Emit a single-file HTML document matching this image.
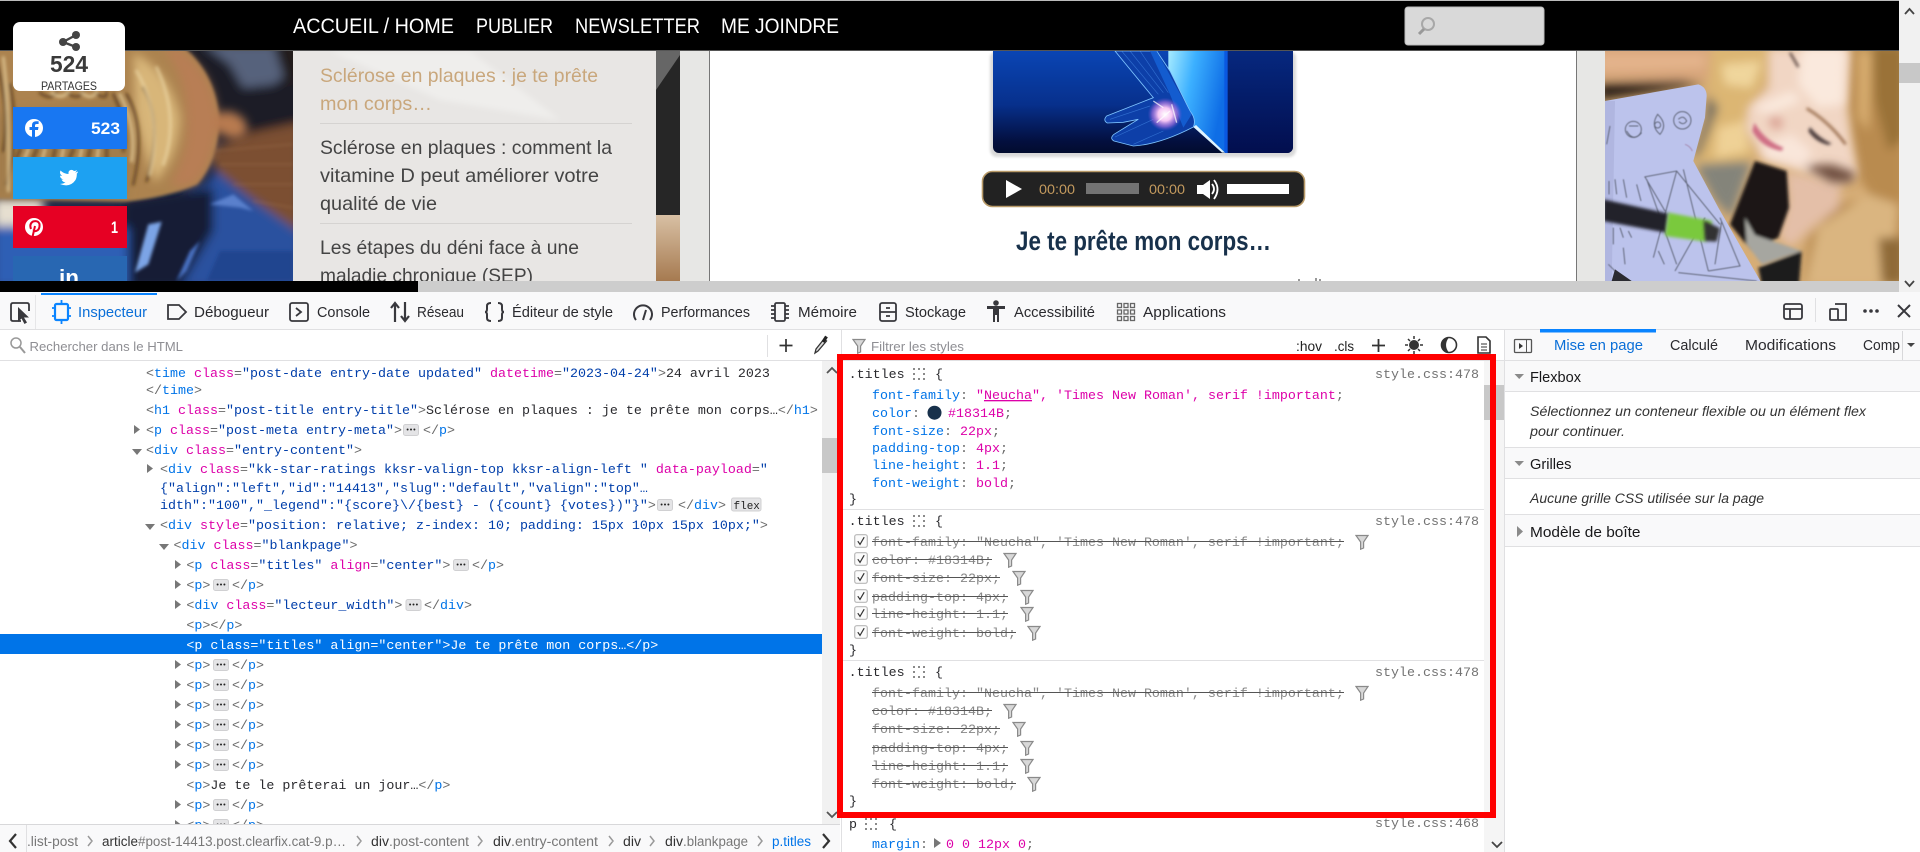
<!DOCTYPE html>
<html lang="fr"><head><meta charset="utf-8"><title>Inspecteur</title>
<style>
html,body{margin:0;padding:0;width:1920px;height:852px;overflow:hidden;background:#fff}
svg{display:block;position:absolute;left:0;top:0}
text{font-family:"Liberation Sans",sans-serif;white-space:pre}
.m text,text.m{font-family:"Liberation Mono",monospace;font-size:13.33px}
.k{fill:#6a6a6a}.t{fill:#0074e8}.a{fill:#dd00a9}.v{fill:#003eaa}.d{fill:#2a2a2e}
.w{fill:#fff}.g{fill:#737373}.s{fill:#888}
</style></head><body>
<svg width="1920" height="852" viewBox="0 0 1920 852" xmlns="http://www.w3.org/2000/svg">
<defs>
<filter id="p3" x="-30%" y="-30%" width="160%" height="160%"><feGaussianBlur stdDeviation="5"/></filter>
<filter id="p8" x="-30%" y="-30%" width="160%" height="160%"><feGaussianBlur stdDeviation="14"/></filter>
<filter id="b3"><feGaussianBlur stdDeviation="3"/></filter>
<filter id="b1"><feGaussianBlur stdDeviation="1.2"/></filter>
<clipPath id="cl"><rect x="0" y="51" width="293" height="230"/></clipPath>
<clipPath id="cr"><rect x="1605" y="51" width="294" height="230"/></clipPath>
<clipPath id="cf"><path d="M993 51H1293V147a6 6 0 0 1-6 6H999a6 6 0 0 1-6-6z"/></clipPath>
<linearGradient id="fg" x1="0" y1="0" x2="0" y2="1"><stop offset="0" stop-color="#0a45b4"/><stop offset=".5" stop-color="#07308c"/><stop offset=".85" stop-color="#030f3e"/><stop offset="1" stop-color="#020a28"/></linearGradient>
<linearGradient id="fp" x1="0" y1="0" x2="1" y2=".35"><stop offset="0" stop-color="#a8ecff"/><stop offset=".45" stop-color="#3cb0ff"/><stop offset="1" stop-color="#0f6ee6"/></linearGradient>
<linearGradient id="fr" x1="0" y1="0" x2="0" y2="1"><stop offset="0" stop-color="#06287f"/><stop offset="1" stop-color="#020d4c"/></linearGradient>
<radialGradient id="gl"><stop offset="0" stop-color="#fff"/><stop offset=".4" stop-color="#f6c6f4"/><stop offset=".75" stop-color="#b070e0" stop-opacity=".6"/><stop offset="1" stop-color="#6a50d0" stop-opacity="0"/></radialGradient>
<linearGradient id="tan" x1="0" y1="0" x2="0" y2="1"><stop offset="0" stop-color="#d8c0a4"/><stop offset="1" stop-color="#a67a50"/></linearGradient>
<symbol id="bd" viewBox="0 0 16 12"><rect x=".5" y=".5" width="15" height="11" rx="2" fill="#e4e4e6" stroke="#d0d0d2"/><circle cx="4.6" cy="5.5" r="1" fill="#222"/><circle cx="8" cy="5.5" r="1" fill="#222"/><circle cx="11.4" cy="5.5" r="1" fill="#222"/></symbol>
<symbol id="fi" viewBox="0 0 14 16"><path d="M1 1.5H13L8.6 8V14L5.6 15.2V8Z" fill="#d8d8d8" stroke="#8a8a8a" stroke-width="1.2"/></symbol>
<symbol id="ck" viewBox="0 0 14 14"><rect x=".7" y=".7" width="12.6" height="12.6" rx="2" fill="#fbfbfb" stroke="#b8b8b8" stroke-width="1.2"/><path d="M3.8 7.2L6 10.4L10.2 3.2" fill="none" stroke="#333" stroke-width="1.2"/></symbol>
<symbol id="dt" viewBox="0 0 12 14"><g fill="#8a8a8a"><rect x="0" y="1" width="2" height="2"/><rect x="5" y="1" width="2" height="2"/><rect x="10" y="1" width="2" height="2"/><rect x="0" y="6" width="2" height="2"/><rect x="10" y="6" width="2" height="2"/><rect x="0" y="11" width="2" height="2"/><rect x="5" y="11" width="2" height="2"/><rect x="10" y="11" width="2" height="2"/></g></symbol>
</defs>

<!-- PAGE -->
<rect width="1920" height="292" fill="#fff"/>
<rect y="0" width="1920" height="1" fill="#bbb"/>
<!-- left photo -->
<g clip-path="url(#cl)"><g transform="translate(0,51) scale(.33333)">
<rect width="879" height="690" fill="#1b2748"/>
<g filter="url(#p8)">
<rect x="560" y="-30" width="350" height="300" fill="#1c1e27"/>
<path d="M610 -20H890V50L820 100L730 110L690 40Z" fill="#56627c"/>
<path d="M820 -20H900V90L860 110Z" fill="#231f1e"/>
<path d="M620 300L760 245L900 215V545L770 475L650 360Z" fill="#7b4f33"/>
<path d="M620 400L650 360L750 440L900 545V710H380L400 470Z" fill="#2c519f"/>
<path d="M370 450L640 410L640 540L540 710H370Z" fill="#161e36"/>
<path d="M-20 525L385 530L385 710H-20Z" fill="#2f5eb5"/>
<path d="M-20 440H130V525H-20Z" fill="#e6dfd0"/>
</g>
<g filter="url(#p3)">
<path d="M700 430L760 480L720 470L630 460Z" fill="#5a80cc"/>
<path d="M445 520L485 512L445 640L405 665Z" fill="#7ca4e6"/>
<path d="M600 570L560 660L530 690L570 600Z" fill="#4a72c4"/>
<path d="M660 600H879V690H620Z" fill="#1f4088" opacity=".7"/>
</g>
<path d="M-20 -20H540Q645 60 657 200Q657 325 592 400Q500 440 380 452L-20 442Z" fill="#ac8350" filter="url(#p3)"/>
<g filter="url(#p8)">
<path d="M530 -10Q640 60 652 200Q650 320 590 395Q540 415 510 400Q570 300 560 200Q560 80 490 -10Z" fill="#b87e54"/>
<path d="M400 5Q510 60 540 200Q535 320 465 395Q430 300 405 180Z" fill="#d8b679"/>
<path d="M-20 190L380 130L400 300L380 440H-20Z" fill="#a27d4c"/>
<ellipse cx="692" cy="222" rx="52" ry="38" fill="#b87a50" transform="rotate(25 692 222)"/>
</g>
<g fill="none" stroke-linecap="round" filter="url(#p3)">
<g stroke="#4f3215" stroke-width="9" opacity=".65">
<path d="M380 130Q440 230 400 400M340 130Q385 220 370 300M120 125Q150 150 170 125M200 125Q235 150 250 122M285 125Q320 150 320 125M430 110Q490 220 440 390M30 100Q60 250 20 400M-10 30Q30 180 10 300"/>
<path d="M60 295L50 320M110 295L100 320M165 295L160 320M220 295L210 320M270 295L265 320M320 290L320 325"/>
</g>
<g stroke="#ecd6a4" stroke-width="9" opacity=".7">
<path d="M410 60Q490 200 450 370M470 50Q540 200 490 340M360 130Q410 230 395 330M155 125Q185 148 205 122M245 125Q275 150 290 122M10 20Q30 180 25 420"/>
<path d="M85 295L75 320M135 295L128 320M190 295L185 320M245 295L240 320M295 295L292 320"/>
</g>
</g>
<path d="M640 300L879 280M660 340L879 340M700 400L879 400M760 450L879 470" stroke="#9a6c48" stroke-width="5" opacity=".5" filter="url(#p3)"/>
</g></g>
<!-- sidebar -->
<rect x="293" y="51" width="363" height="230" fill="#e8e6e4"/>
<path d="M330 51H470L560 120L440 100Z" fill="#efeeec" filter="url(#b3)"/>
<rect x="656" y="51" width="24" height="164" fill="#262626"/>
<path d="M656 90L680 55V51H656Z" fill="#666"/>
<rect x="656" y="215" width="24" height="66" fill="url(#tan)"/>
<rect x="680" y="51" width="29" height="230" fill="#e7e7e5"/>
<rect x="709" y="51" width="1" height="230" fill="#777"/>
<rect x="710" y="51" width="866" height="230" fill="#fff"/>
<rect x="1576" y="51" width="1" height="230" fill="#777"/>
<rect x="1577" y="51" width="28" height="230" fill="#e7e7e5"/>
<g font-size="19.5" fill="#444">
<text x="320" y="82" fill="#c9a77c" textLength="278" lengthAdjust="spacingAndGlyphs">Sclérose en plaques : je te prête</text>
<text x="320" y="110" fill="#c9a77c" textLength="112" lengthAdjust="spacingAndGlyphs">mon corps…</text>
<text x="320" y="154" textLength="292" lengthAdjust="spacingAndGlyphs">Sclérose en plaques : comment la</text>
<text x="320" y="182" textLength="279" lengthAdjust="spacingAndGlyphs">vitamine D peut améliorer votre</text>
<text x="320" y="210" textLength="117" lengthAdjust="spacingAndGlyphs">qualité de vie</text>
<text x="320" y="254" textLength="259" lengthAdjust="spacingAndGlyphs">Les étapes du déni face à une</text>
<text x="320" y="282" textLength="213" lengthAdjust="spacingAndGlyphs">maladie chronique (SEP)</text>
</g>
<rect x="320" y="123" width="312" height="1" fill="#d5d3d1"/>
<rect x="320" y="223" width="312" height="1" fill="#d5d3d1"/>
<!-- foot image -->
<rect x="990" y="51" width="306" height="106" rx="7" fill="#aaa" opacity=".45" filter="url(#b1)"/>
<g clip-path="url(#cf)"><g transform="translate(990,51) scale(.33333)">
<rect x="0" y="0" width="930" height="320" fill="url(#fg)"/>
<path d="M535 -5H705V305L610 225L535 60Z" fill="url(#fp)"/>
<rect x="705" y="0" width="225" height="320" fill="url(#fr)"/>
<rect x="703" y="0" width="10" height="306" fill="#0a58e0"/>
<path d="M610 228L696 305H705L618 222Z" fill="#dff4ff"/>
<path d="M375 0L490 140L350 195Q338 208 352 216L400 214L445 205L372 250Q358 262 372 270L430 285Q510 280 610 228Q620 205 600 180L540 60L500 0Z" fill="#0d3fa8" stroke="#7ec4ff" stroke-width="2.5"/>
<path d="M395 0L505 130M420 0L520 125M450 0L535 125M360 205L480 165M375 258L490 205M430 280L520 240" stroke="#5aa6ff" stroke-width="2" fill="none" opacity=".45"/>
<path d="M480 0H500L560 110L605 190L580 230L540 130Z" fill="#1564d8" opacity=".8"/>
<ellipse cx="525" cy="190" rx="52" ry="50" fill="url(#gl)"/>
<path d="M490 150L520 170M500 215L540 180M545 160L560 215" stroke="#fff" stroke-width="4" opacity=".7" fill="none"/>
</g></g>
<!-- audio -->
<rect x="982.5" y="171.5" width="322" height="35" rx="10" fill="#222" stroke="#b89a68" stroke-width="1.6"/>
<path d="M1006 180L1022 189L1006 198Z" fill="#fff"/>
<text x="1039" y="194" font-size="14" fill="#c39a5e" textLength="36" lengthAdjust="spacingAndGlyphs">00:00</text>
<rect x="1086" y="183" width="53" height="11" fill="#737373"/>
<text x="1149" y="194" font-size="14" fill="#c39a5e" textLength="36" lengthAdjust="spacingAndGlyphs">00:00</text>
<path d="M1197 185H1203L1210 180V199L1203 194H1197Z" fill="#fff"/>
<path d="M1212 184Q1216 189 1212 194M1214 180Q1221 189 1214 199" stroke="#fff" stroke-width="1.8" fill="none"/>
<rect x="1227" y="184" width="62" height="10" fill="#fff"/>
<text x="1016" y="250" font-size="27" font-weight="700" fill="#18314b" textLength="255" lengthAdjust="spacingAndGlyphs">Je te prête mon corps…</text>
<path d="M1299 281v-2M1316 281v-3M1320 281v-2" stroke="#555" stroke-width="1.2"/>
<!-- right photo -->
<g clip-path="url(#cr)"><g transform="translate(1605,51) scale(.33333)">
<rect width="882" height="690" fill="#d6ad76"/>
<g filter="url(#p8)">
<path d="M-20 -20H340L320 90L-20 85Z" fill="#d8a67c"/>
<path d="M-20 10H300V50L-20 60Z" fill="#e4b48c"/>
<path d="M-20 95L230 88L300 100L-20 150Z" fill="#35271f"/>
<path d="M730 -20H900V700H590L610 560L700 460L800 440L755 370L735 260L725 160Z" fill="#b98b50"/>
<path d="M800 -20H900V260L850 300L810 150Z" fill="#9a7238"/>
<path d="M760 0L800 0L790 240L760 200Z" fill="#d8ad70"/>
<path d="M640 530L790 430L880 460L860 700H600Z" fill="#dab580"/>
<path d="M820 560L900 560V700H830Z" fill="#8f6a38"/>
<path d="M320 -20H490L490 80L430 170L450 310L400 352L250 350L330 190L310 100Z" fill="#dcb673"/>
<path d="M350 40L470 30L440 110L360 100Z" fill="#f0d69c"/>
<path d="M340 230L420 210L430 300L330 320Z" fill="#efd196"/>
<path d="M270 340L440 330L380 500L330 450Z" fill="#84847a"/>
<path d="M310 130L340 170L285 310L260 325L305 200Z" fill="#67675f"/>
<path d="M540 360L710 395L700 470L620 530L560 590L520 560L550 450Z" fill="#e4bfa8"/>
</g>
<path d="M490 -10H735L725 170L738 260L758 372L690 400L560 352L472 322L420 232L428 170L490 110Z" fill="#f1d6c4" filter="url(#p8)"/>
<g filter="url(#p8)">
<path d="M590 -10H720L715 160L640 170L580 100Z" fill="#fae9dd"/>
<path d="M440 170L560 120L590 150L490 190Z" fill="#fae9dd"/>
<path d="M480 320L600 345L620 300L560 250L480 280Z" fill="#f9e6da"/>
<path d="M595 345L680 340L750 365L740 395L680 395Z" fill="#705040"/>
<path d="M490 195L530 200L530 235L500 230Z" fill="#d89e90"/>
</g>
<g filter="url(#p3)">
<path d="M448 215Q480 270 535 290L530 300Q470 290 442 240Z" fill="#cf6e84"/>
<path d="M615 228Q640 260 680 278L670 282Q630 272 610 240Z" fill="#4a3a3a"/>
<path d="M605 172Q670 210 722 280" stroke="#8c5f3e" stroke-width="7" fill="none"/>
<path d="M555 5L580 48" stroke="#5a4640" stroke-width="7" fill="none"/>
</g>
<g filter="url(#p3)">
<path d="M450 330L545 360L552 470L520 560L440 600L375 520Z" fill="#1b1919"/>
<path d="M420 500L450 552L590 600L470 640L425 580Z" fill="#a6a6a0"/>
<path d="M460 650L590 600L582 700H470Z" fill="#1c1a1a"/>
</g>
<path d="M0 150L280 100Q305 108 305 135L300 200L265 330L340 470L472 700H-5Z" fill="#bcc3ec"/>
<path d="M0 150L30 150L20 700H0Z" fill="#a4a9d4" opacity=".5"/>
<g fill="none" stroke="#62687c" stroke-width="3" filter="url(#b1)">
<path d="M118 378L215 360L345 520M125 385L215 640M215 360L145 620M235 355L310 660M300 500L210 660M120 378L180 480M345 500L405 645L310 660M220 665L455 690M330 640L350 510"/>
<circle cx="85" cy="235" r="24"/><path d="M65 240Q85 275 110 245M72 225H100"/>
<path d="M158 190Q190 220 165 250Q135 225 158 190Z"/><circle cx="158" cy="222" r="9"/>
<circle cx="232" cy="208" r="26"/><path d="M220 205Q235 190 245 210Q235 225 222 212"/>
<path d="M15 225L5 280M30 385L35 430M55 385L65 440M95 400L108 450M12 390V430M25 530V580M45 530L55 560M70 540L80 560M55 590L60 640M160 600L178 640M10 640L40 670"/>
<path d="M240 280Q255 285 262 300" stroke="#a48ab0"/>
</g>
<path d="M-5 445L190 488L183 545L-5 510Z" fill="#21212c" filter="url(#p3)"/>
<path d="M190 485L322 510L303 572L180 555Z" fill="#7ac93c" filter="url(#p3)"/>
<path d="M296 508L345 532L335 572L300 570Z" fill="#333" filter="url(#p3)"/>
<path d="M30 655L80 690H20Z" fill="#2a2a30"/>
</g></g>
<!-- nav -->
<rect y="1" width="1899" height="50" fill="#000"/>
<rect y="50" width="1899" height="1" fill="#555"/>
<g font-size="21" fill="#fff">
<text x="293" y="33" textLength="161" lengthAdjust="spacingAndGlyphs">ACCUEIL / HOME</text>
<text x="476" y="33" textLength="77" lengthAdjust="spacingAndGlyphs">PUBLIER</text>
<text x="575" y="33" textLength="125" lengthAdjust="spacingAndGlyphs">NEWSLETTER</text>
<text x="721" y="33" textLength="118" lengthAdjust="spacingAndGlyphs">ME JOINDRE</text>
</g>
<rect x="1405" y="7" width="139" height="38" rx="3" fill="#d9d9d9" stroke="#bbb"/>
<circle cx="1428" cy="24" r="6" fill="none" stroke="#a8a8a8" stroke-width="2"/>
<path d="M1424 29L1419 34" stroke="#999" stroke-width="3"/>
<!-- share -->
<rect x="13" y="22" width="112" height="69" rx="7" fill="#fff"/>
<g fill="#444"><circle cx="76" cy="35" r="4"/><circle cx="63" cy="42" r="4"/><circle cx="76" cy="47" r="4"/><path d="M63 42L76 35M63 42L76 47" stroke="#444" stroke-width="2.4"/></g>
<text x="50" y="72" font-size="23" font-weight="700" fill="#3a3a3a" textLength="38" lengthAdjust="spacingAndGlyphs">524</text>
<text x="41" y="90" font-size="11.5" fill="#333" textLength="56" lengthAdjust="spacingAndGlyphs">PARTAGES</text>
<rect x="13" y="107" width="114" height="42" fill="#1877f2"/>
<circle cx="34" cy="128" r="9" fill="#fff"/>
<path d="M35 137V130H38L38.5 127H35V125.5Q35 124 36.7 124H38.6V121.2H35.8Q32 121.5 32 125V127H29.5V130H32V137Z" fill="#1877f2"/>
<text x="91" y="134" font-size="17" font-weight="700" fill="#fff" textLength="29" lengthAdjust="spacingAndGlyphs">523</text>
<rect x="13" y="157" width="114" height="42" fill="#1da1f2"/>
<path d="M78 171.5Q76 172.5 75 172.5Q76.5 171.5 77 170Q75.5 171 74 171Q72.5 169.5 70.5 170Q68 171 68.5 174Q64 174 60.5 170.5Q59 173.5 62 176Q61 176 60 175.5Q60 178.5 63.5 179.5H61.5Q62.5 182 65.5 182.5Q63 184 60 184Q70 188 75.5 180Q77 177 76.8 173.5Q77.8 173 78 171.5Z" fill="#fff"/>
<rect x="13" y="206" width="114" height="42" fill="#e60023"/>
<circle cx="34" cy="227" r="9" fill="#fff"/>
<path d="M32.5 237L35 226M31 229Q29 224 33 221.5Q38 220 39.5 224Q40 230 36 231Q34 231.5 33.5 229.5" fill="none" stroke="#e60023" stroke-width="2"/>
<text x="111" y="233" font-size="17" font-weight="700" fill="#fff" textLength="7" lengthAdjust="spacingAndGlyphs">1</text>
<rect x="13" y="256" width="114" height="26" fill="#2867b2"/>
<text x="59" y="285" font-size="22" font-weight="700" fill="#fff" textLength="20" lengthAdjust="spacingAndGlyphs">in</text>
<!-- page scrollbars -->
<rect x="1899" y="0" width="21" height="292" fill="#f1f1f1"/>
<rect x="1899" y="63" width="21" height="20" fill="#c8c8c8"/>
<path d="M1905 14L1909.5 9L1914 14M1905 281L1909.5 286L1914 281" fill="none" stroke="#444" stroke-width="1.8"/>
<rect y="281" width="1899" height="11" fill="#cdcdcd"/>
<rect y="281" width="418" height="11" fill="#000"/>

<!-- DEVTOOLS TOOLBAR -->
<rect y="292" width="1920" height="37" fill="#f9f9fa"/>
<rect y="329" width="1920" height="1" fill="#e0e0e2"/>
<rect x="41" y="293" width="116" height="2" fill="#0a84ff"/>
<rect x="35" y="295" width="1" height="34" fill="#e6e6e8"/>
<g font-size="14.5" fill="#2a2a2e">
<text x="78" y="317" fill="#0a6fd8" textLength="69" lengthAdjust="spacingAndGlyphs">Inspecteur</text>
<text x="194" y="317" textLength="75" lengthAdjust="spacingAndGlyphs">Débogueur</text>
<text x="317" y="317" textLength="53" lengthAdjust="spacingAndGlyphs">Console</text>
<text x="417" y="317" textLength="47" lengthAdjust="spacingAndGlyphs">Réseau</text>
<text x="512" y="317" textLength="101" lengthAdjust="spacingAndGlyphs">Éditeur de style</text>
<text x="661" y="317" textLength="89" lengthAdjust="spacingAndGlyphs">Performances</text>
<text x="798" y="317" textLength="59" lengthAdjust="spacingAndGlyphs">Mémoire</text>
<text x="905" y="317" textLength="61" lengthAdjust="spacingAndGlyphs">Stockage</text>
<text x="1014" y="317" textLength="81" lengthAdjust="spacingAndGlyphs">Accessibilité</text>
<text x="1143" y="317" textLength="83" lengthAdjust="spacingAndGlyphs">Applications</text>
</g>
<g fill="none" stroke="#38383d" stroke-width="1.8">
<path d="M21 321H13Q11 321 11 319V305Q11 303 13 303H27Q29 303 29 305V311"/>
<path d="M18 307L18 322L21.5 318.5L24.5 324L27 322.5L24 317.5H29Z" fill="#38383d" stroke="none"/>
<rect x="55" y="304" width="13" height="16" rx="1.5" stroke="#0a84ff" stroke-width="2.2"/>
<path d="M61.5 300V304M61.5 320V324M52 308H55M52 316H55M68 308H71M68 316H71" stroke="#0a84ff" stroke-width="1.8"/>
<path d="M168 305H179L186 312L179 319H168Z"/>
<rect x="290" y="303" width="18" height="18" rx="2"/><path d="M296 308L301 312L296 316"/>
<path d="M395 322V304M391 308L395 303L399 308M405 302V320M401 316L405 321L409 316" stroke-width="2.2"/>
<path d="M491 303Q487 303 487 306V309Q487 312 485 312Q487 312 487 315V318Q487 321 491 321M498 303Q502 303 502 306V309Q502 312 504 312Q502 312 502 315V318Q502 321 498 321" stroke-width="2"/>
<path d="M636 320A9 9 0 1 1 650 320" stroke-width="2"/><path d="M643 320L646 310" stroke-width="2"/>
<rect x="775" y="303" width="10" height="18" rx="1.5"/><path d="M771 306H775M771 310H775M771 314H775M771 318H775M785 306H789M785 310H789M785 314H789M785 318H789"/>
<rect x="880" y="303" width="16" height="18" rx="2"/><path d="M880 312H896M886 308H890M886 316H890"/>
</g>
<circle cx="996" cy="303" r="2.8" fill="#38383d"/>
<path d="M987 306H1005V309H999V322H997V315H995V322H993V309H987Z" fill="#38383d"/>
<g fill="none" stroke="#666" stroke-width="1.3">
<rect x="1117.5" y="303.5" width="4" height="4"/><rect x="1124" y="303.5" width="4" height="4"/><rect x="1130.5" y="303.5" width="4" height="4"/>
<rect x="1117.5" y="310" width="4" height="4"/><rect x="1124" y="310" width="4" height="4"/><rect x="1130.5" y="310" width="4" height="4"/>
<rect x="1117.5" y="316.5" width="4" height="4"/><rect x="1124" y="316.5" width="4" height="4"/><rect x="1130.5" y="316.5" width="4" height="4"/>
</g>
<g fill="none" stroke="#38383d" stroke-width="1.8">
<rect x="1784" y="304" width="18" height="15" rx="2"/><path d="M1784 309H1802M1790 309V319"/>
<path d="M1835 304H1846V320H1838"/><rect x="1830" y="309" width="8" height="11" rx="1"/>
<path d="M1898 305L1910 317M1910 305L1898 317" stroke-width="2"/>
</g>
<rect x="1815" y="298" width="1" height="24" fill="#e0e0e2"/>
<circle cx="1865" cy="311" r="1.8" fill="#38383d"/><circle cx="1871" cy="311" r="1.8" fill="#38383d"/><circle cx="1877" cy="311" r="1.8" fill="#38383d"/>

<!-- MARKUP -->
<rect y="330" width="840" height="30" fill="#fff"/>
<rect y="360" width="840" height="1" fill="#e0e0e2"/>
<circle cx="16" cy="343" r="5" fill="none" stroke="#999" stroke-width="1.5"/><path d="M20 347L25 353" stroke="#999" stroke-width="2"/>
<text x="29.5" y="351" font-size="13" fill="#8e8e93" textLength="153.5" lengthAdjust="spacingAndGlyphs">Rechercher dans le HTML</text>
<rect x="767" y="335" width="1" height="22" fill="#e0e0e2"/>
<path d="M786 339V352M779.5 345.5H792.5" stroke="#333" stroke-width="1.7"/>
<path d="M824 339L826.5 341L818 351L815 353L816 349Z" fill="#ddd" stroke="#333" stroke-width="1.3"/><path d="M823 342L826.5 336.5" stroke="#222" stroke-width="3.2"/>
<rect y="634" width="822" height="20" fill="#0074e8"/>
<rect x="822" y="361" width="18" height="463" fill="#f1f1f1"/>
<rect x="822" y="438" width="18" height="35" fill="#c8c8c8"/>
<path d="M827 373L832 368L837 373M827 812L832 817L837 812" fill="none" stroke="#555" stroke-width="1.8"/>
<g class="m" font-size="13.33">
<text x="146" y="377"><tspan class="k">&lt;</tspan><tspan class="t">time</tspan> <tspan class="a">class</tspan><tspan class="k">=</tspan><tspan class="v">"post-date entry-date updated"</tspan> <tspan class="a">datetime</tspan><tspan class="k">=</tspan><tspan class="v">"2023-04-24"</tspan><tspan class="k">&gt;</tspan><tspan class="d">24 avril 2023</tspan></text>
<text x="146" y="394"><tspan class="k">&lt;/</tspan><tspan class="t">time</tspan><tspan class="k">&gt;</tspan></text>
<text x="146" y="414"><tspan class="k">&lt;</tspan><tspan class="t">h1</tspan> <tspan class="a">class</tspan><tspan class="k">=</tspan><tspan class="v">"post-title entry-title"</tspan><tspan class="k">&gt;</tspan><tspan class="d">Sclérose en plaques : je te prête mon corps…</tspan><tspan class="k">&lt;/</tspan><tspan class="t">h1</tspan><tspan class="k">&gt;</tspan></text>
<text x="146" y="434"><tspan class="k">&lt;</tspan><tspan class="t">p</tspan> <tspan class="a">class</tspan><tspan class="k">=</tspan><tspan class="v">"post-meta entry-meta"</tspan><tspan class="k">&gt;</tspan></text>
<text x="423" y="434"><tspan class="k">&lt;/</tspan><tspan class="t">p</tspan><tspan class="k">&gt;</tspan></text>
<text x="146" y="454"><tspan class="k">&lt;</tspan><tspan class="t">div</tspan> <tspan class="a">class</tspan><tspan class="k">=</tspan><tspan class="v">"entry-content"</tspan><tspan class="k">&gt;</tspan></text>
<text x="160" y="473"><tspan class="k">&lt;</tspan><tspan class="t">div</tspan> <tspan class="a">class</tspan><tspan class="k">=</tspan><tspan class="v">"kk-star-ratings kksr-valign-top kksr-align-left "</tspan> <tspan class="a">data-payload</tspan><tspan class="k">=</tspan><tspan class="v">"</tspan></text>
<text x="160" y="492" class="v">{"align":"left","id":"14413","slug":"default","valign":"top"…</text>
<text x="160" y="509" class="v">idth":"100","_legend":"{score}\/{best} - ({count} {votes})"}"<tspan class="k">&gt;</tspan></text>
<text x="678" y="509"><tspan class="k">&lt;/</tspan><tspan class="t">div</tspan><tspan class="k">&gt;</tspan></text>
<text x="160" y="529"><tspan class="k">&lt;</tspan><tspan class="t">div</tspan> <tspan class="a">style</tspan><tspan class="k">=</tspan><tspan class="v">"position: relative; z-index: 10; padding: 15px 10px 15px 10px;"</tspan><tspan class="k">&gt;</tspan></text>
<text x="173.5" y="549"><tspan class="k">&lt;</tspan><tspan class="t">div</tspan> <tspan class="a">class</tspan><tspan class="k">=</tspan><tspan class="v">"blankpage"</tspan><tspan class="k">&gt;</tspan></text>
<text x="186.4" y="569"><tspan class="k">&lt;</tspan><tspan class="t">p</tspan> <tspan class="a">class</tspan><tspan class="k">=</tspan><tspan class="v">"titles"</tspan> <tspan class="a">align</tspan><tspan class="k">=</tspan><tspan class="v">"center"</tspan><tspan class="k">&gt;</tspan></text>
<text x="472" y="569"><tspan class="k">&lt;/</tspan><tspan class="t">p</tspan><tspan class="k">&gt;</tspan></text>
<text x="186.4" y="589"><tspan class="k">&lt;</tspan><tspan class="t">p</tspan><tspan class="k">&gt;</tspan></text><text x="232" y="589"><tspan class="k">&lt;/</tspan><tspan class="t">p</tspan><tspan class="k">&gt;</tspan></text>
<text x="186.4" y="609"><tspan class="k">&lt;</tspan><tspan class="t">div</tspan> <tspan class="a">class</tspan><tspan class="k">=</tspan><tspan class="v">"lecteur_width"</tspan><tspan class="k">&gt;</tspan></text>
<text x="424" y="609"><tspan class="k">&lt;/</tspan><tspan class="t">div</tspan><tspan class="k">&gt;</tspan></text>
<text x="186.4" y="629"><tspan class="k">&lt;</tspan><tspan class="t">p</tspan><tspan class="k">&gt;&lt;/</tspan><tspan class="t">p</tspan><tspan class="k">&gt;</tspan></text>
<text x="186.4" y="649" class="w">&lt;p class="titles" align="center"&gt;Je te prête mon corps…&lt;/p&gt;</text>
<text x="186.4" y="669"><tspan class="k">&lt;</tspan><tspan class="t">p</tspan><tspan class="k">&gt;</tspan></text><text x="232" y="669"><tspan class="k">&lt;/</tspan><tspan class="t">p</tspan><tspan class="k">&gt;</tspan></text>
<text x="186.4" y="689"><tspan class="k">&lt;</tspan><tspan class="t">p</tspan><tspan class="k">&gt;</tspan></text><text x="232" y="689"><tspan class="k">&lt;/</tspan><tspan class="t">p</tspan><tspan class="k">&gt;</tspan></text>
<text x="186.4" y="709"><tspan class="k">&lt;</tspan><tspan class="t">p</tspan><tspan class="k">&gt;</tspan></text><text x="232" y="709"><tspan class="k">&lt;/</tspan><tspan class="t">p</tspan><tspan class="k">&gt;</tspan></text>
<text x="186.4" y="729"><tspan class="k">&lt;</tspan><tspan class="t">p</tspan><tspan class="k">&gt;</tspan></text><text x="232" y="729"><tspan class="k">&lt;/</tspan><tspan class="t">p</tspan><tspan class="k">&gt;</tspan></text>
<text x="186.4" y="749"><tspan class="k">&lt;</tspan><tspan class="t">p</tspan><tspan class="k">&gt;</tspan></text><text x="232" y="749"><tspan class="k">&lt;/</tspan><tspan class="t">p</tspan><tspan class="k">&gt;</tspan></text>
<text x="186.4" y="769"><tspan class="k">&lt;</tspan><tspan class="t">p</tspan><tspan class="k">&gt;</tspan></text><text x="232" y="769"><tspan class="k">&lt;/</tspan><tspan class="t">p</tspan><tspan class="k">&gt;</tspan></text>
<text x="186.4" y="789"><tspan class="k">&lt;</tspan><tspan class="t">p</tspan><tspan class="k">&gt;</tspan><tspan class="d">Je te le prêterai un jour…</tspan><tspan class="k">&lt;/</tspan><tspan class="t">p</tspan><tspan class="k">&gt;</tspan></text>
<text x="186.4" y="809"><tspan class="k">&lt;</tspan><tspan class="t">p</tspan><tspan class="k">&gt;</tspan></text><text x="232" y="809"><tspan class="k">&lt;/</tspan><tspan class="t">p</tspan><tspan class="k">&gt;</tspan></text>
<text x="186.4" y="829"><tspan class="k">&lt;</tspan><tspan class="t">p</tspan><tspan class="k">&gt;</tspan></text><text x="232" y="829"><tspan class="k">&lt;/</tspan><tspan class="t">p</tspan><tspan class="k">&gt;</tspan></text>
</g>
<g>
<use href="#bd" x="403" y="424" width="16" height="12"/>
<use href="#bd" x="657" y="499" width="16" height="12"/>
<use href="#bd" x="453" y="559" width="16" height="12"/>
<use href="#bd" x="213" y="579" width="16" height="12"/>
<use href="#bd" x="405.5" y="599" width="16" height="12"/>
<use href="#bd" x="213" y="659" width="16" height="12"/>
<use href="#bd" x="213" y="679" width="16" height="12"/>
<use href="#bd" x="213" y="699" width="16" height="12"/>
<use href="#bd" x="213" y="719" width="16" height="12"/>
<use href="#bd" x="213" y="739" width="16" height="12"/>
<use href="#bd" x="213" y="759" width="16" height="12"/>
<use href="#bd" x="213" y="799" width="16" height="12"/>
<use href="#bd" x="213" y="819" width="16" height="12"/>
</g>
<rect x="731.5" y="498" width="29.5" height="13" rx="2" fill="#e4e4e6" stroke="#d0d0d2"/>
<text x="733.5" y="509" class="m" fill="#222" style="font-size:11px">flex</text>
<g fill="#777">
<path d="M134 425L140 429.5L134 434Z"/><path d="M132 449H142L137 455Z"/><path d="M147 464L153 468.5L147 473Z"/><path d="M145 524H155L150 530Z"/><path d="M159 544H169L164 550Z"/><path d="M175 560L181 564.5L175 569Z"/>
<path d="M175 580L181 584.5L175 589Z"/><path d="M175 600L181 604.5L175 609Z"/><path d="M175 660L181 664.5L175 669Z"/><path d="M175 680L181 684.5L175 689Z"/><path d="M175 700L181 704.5L175 709Z"/><path d="M175 720L181 724.5L175 729Z"/><path d="M175 740L181 744.5L175 749Z"/><path d="M175 760L181 764.5L175 769Z"/><path d="M175 800L181 804.5L175 809Z"/><path d="M175 820L181 824.5L175 829Z"/>
</g>
<!-- breadcrumb -->
<rect y="824" width="840" height="28" fill="#f9f9fa"/>
<rect y="824" width="840" height="1" fill="#d8d8da"/>
<rect x="26" y="825" width="1" height="27" fill="#e0e0e2"/>
<path d="M16 834L10 841L16 848M823 834L829 841L823 848" fill="none" stroke="#333" stroke-width="2.2"/>
<g font-size="13.5" fill="#777">
<text x="27" y="846" textLength="51" lengthAdjust="spacingAndGlyphs">.list-post</text>
<text x="102" y="846" fill="#333" textLength="36" lengthAdjust="spacingAndGlyphs">article</text>
<text x="138" y="846" textLength="208" lengthAdjust="spacingAndGlyphs">#post-14413.post.clearfix.cat-9.p…</text>
<text x="371" y="846" fill="#333" textLength="18" lengthAdjust="spacingAndGlyphs">div</text>
<text x="389" y="846" textLength="80" lengthAdjust="spacingAndGlyphs">.post-content</text>
<text x="493" y="846" fill="#333" textLength="18" lengthAdjust="spacingAndGlyphs">div</text>
<text x="511" y="846" textLength="87" lengthAdjust="spacingAndGlyphs">.entry-content</text>
<text x="623" y="846" fill="#333" textLength="18" lengthAdjust="spacingAndGlyphs">div</text>
<text x="665" y="846" fill="#333" textLength="18" lengthAdjust="spacingAndGlyphs">div</text>
<text x="683" y="846" textLength="65" lengthAdjust="spacingAndGlyphs">.blankpage</text>
<text x="772" y="846" fill="#0074e8" textLength="39" lengthAdjust="spacingAndGlyphs">p.titles</text>
</g>
<path d="M88 836L92 841L88 846M357 836L361 841L357 846M478 836L482 841L478 846M609 836L613 841L609 846M650 836L654 841L650 846M758 836L762 841L758 846" fill="none" stroke="#999" stroke-width="1.5"/>

<!-- RULES -->
<rect x="840" y="330" width="665" height="522" fill="#fff"/>
<rect x="841" y="330" width="1" height="522" fill="#e0e0e2"/>
<use href="#fi" x="852" y="338" width="14" height="16"/>
<text x="871" y="351" font-size="13" fill="#8e8e93" textLength="93" lengthAdjust="spacingAndGlyphs">Filtrer les styles</text>
<text x="1296" y="351" font-size="13.5" fill="#222" textLength="26" lengthAdjust="spacingAndGlyphs">:hov</text>
<text x="1334" y="351" font-size="13.5" fill="#222" textLength="20" lengthAdjust="spacingAndGlyphs">.cls</text>
<path d="M1378.5 339V352M1372 345.5H1385" stroke="#333" stroke-width="1.8"/>
<circle cx="1414" cy="345" r="5" fill="#333"/><path d="M1414 336V339M1414 351V354M1405 345H1408M1420 345H1423M1408 339L1410 341M1418 349L1420 351M1420 339L1418 341M1410 349L1408 351" stroke="#333" stroke-width="1.5"/>
<circle cx="1449" cy="345" r="7.5" fill="#fff" stroke="#333" stroke-width="1.6"/><path d="M1449 337.5A7.5 7.5 0 0 0 1449 352.5A11 11 0 0 1 1449 337.5Z" fill="#333"/>
<path d="M1478 337H1486L1490 341V353H1478Z" fill="#fff" stroke="#333" stroke-width="1.6"/><path d="M1481 344H1487M1481 347H1487M1481 350H1487" stroke="#333"/>
<rect x="1484" y="361" width="20" height="491" fill="#f5f5f5"/>
<rect x="1484" y="385" width="20" height="35" fill="#c8c8c8"/>
<path d="M1492 842L1497 847L1502 842" fill="none" stroke="#444" stroke-width="1.8"/>
<g class="m">
<text x="848.6" y="378" class="d">.titles</text><text x="935" y="378" class="d">{</text>
<text x="1375" y="378" class="g">style.css:478</text>
<text x="872" y="399"><tspan class="t">font-family</tspan><tspan class="k">: </tspan><tspan class="a">"<tspan text-decoration="underline">Neucha</tspan>", 'Times New Roman', serif !important</tspan><tspan class="k">;</tspan></text>
<text x="872" y="417"><tspan class="t">color</tspan><tspan class="k">:</tspan></text><text x="948" y="417"><tspan class="a">#18314B</tspan><tspan class="k">;</tspan></text>
<text x="872" y="435"><tspan class="t">font-size</tspan><tspan class="k">: </tspan><tspan class="a">22px</tspan><tspan class="k">;</tspan></text>
<text x="872" y="452"><tspan class="t">padding-top</tspan><tspan class="k">: </tspan><tspan class="a">4px</tspan><tspan class="k">;</tspan></text>
<text x="872" y="469"><tspan class="t">line-height</tspan><tspan class="k">: </tspan><tspan class="a">1.1</tspan><tspan class="k">;</tspan></text>
<text x="872" y="487"><tspan class="t">font-weight</tspan><tspan class="k">: </tspan><tspan class="a">bold</tspan><tspan class="k">;</tspan></text>
<text x="849" y="503" class="d">}</text>
<text x="848.6" y="525" class="d">.titles</text><text x="935" y="525" class="d">{</text>
<text x="1375" y="525" class="g">style.css:478</text>
<g class="s">
<text x="872" y="546">font-family: "Neucha", 'Times New Roman', serif !important;</text>
<text x="872" y="564">color: #18314B;</text>
<text x="872" y="582">font-size: 22px;</text>
<text x="872" y="601">padding-top: 4px;</text>
<text x="872" y="618">line-height: 1.1;</text>
<text x="872" y="637">font-weight: bold;</text>
</g>
<text x="849" y="654" class="d">}</text>
<text x="848.6" y="676" class="d">.titles</text><text x="935" y="676" class="d">{</text>
<text x="1375" y="676" class="g">style.css:478</text>
<g class="s">
<text x="872" y="697">font-family: "Neucha", 'Times New Roman', serif !important;</text>
<text x="872" y="715">color: #18314B;</text>
<text x="872" y="733">font-size: 22px;</text>
<text x="872" y="752">padding-top: 4px;</text>
<text x="872" y="770">line-height: 1.1;</text>
<text x="872" y="788">font-weight: bold;</text>
</g>
<text x="849" y="805" class="d">}</text>
<text x="849" y="828" class="d">p</text><text x="889" y="828" class="d">{</text>
<text x="1375" y="827" class="g">style.css:468</text>
<text x="872" y="848"><tspan class="t">margin</tspan><tspan class="k">:</tspan></text>
<text x="946" y="848"><tspan class="a">0 0 12px 0</tspan><tspan class="k">;</tspan></text>
</g>
<path d="M934 838L941 843L934 848Z" fill="#777"/>
<circle cx="934.5" cy="412.7" r="7" fill="#18314b"/>
<rect x="843" y="509" width="641" height="1" fill="#e0e0e2"/>
<rect x="843" y="660" width="641" height="1" fill="#e0e0e2"/>
<use href="#dt" x="913" y="367" width="12" height="14"/>
<use href="#dt" x="913" y="514" width="12" height="14"/>
<use href="#dt" x="913" y="665" width="12" height="14"/>
<use href="#dt" x="865" y="817" width="12" height="14"/>
<g fill="#555">
<rect x="872" y="541" width="472" height="1"/><rect x="872" y="559" width="120" height="1"/><rect x="872" y="577" width="128" height="1"/><rect x="872" y="596" width="136" height="1"/><rect x="872" y="613" width="136" height="1"/><rect x="872" y="632" width="144" height="1"/>
<rect x="872" y="692" width="472" height="1"/><rect x="872" y="710" width="120" height="1"/><rect x="872" y="728" width="128" height="1"/><rect x="872" y="747" width="136" height="1"/><rect x="872" y="765" width="136" height="1"/><rect x="872" y="783" width="144" height="1"/>
</g>
<use href="#ck" x="854" y="534" width="14" height="14"/><use href="#ck" x="854" y="552" width="14" height="14"/><use href="#ck" x="854" y="570" width="14" height="14"/><use href="#ck" x="854" y="589" width="14" height="14"/><use href="#ck" x="854" y="606" width="14" height="14"/><use href="#ck" x="854" y="625" width="14" height="14"/>
<use href="#fi" x="1355" y="534" width="14" height="16"/><use href="#fi" x="1003" y="552" width="14" height="16"/><use href="#fi" x="1012" y="570" width="14" height="16"/><use href="#fi" x="1020" y="589" width="14" height="16"/><use href="#fi" x="1020" y="606" width="14" height="16"/><use href="#fi" x="1027" y="625" width="14" height="16"/>
<use href="#fi" x="1355" y="685" width="14" height="16"/><use href="#fi" x="1003" y="703" width="14" height="16"/><use href="#fi" x="1012" y="721" width="14" height="16"/><use href="#fi" x="1020" y="740" width="14" height="16"/><use href="#fi" x="1020" y="758" width="14" height="16"/><use href="#fi" x="1027" y="776" width="14" height="16"/>
<rect x="840" y="360" width="664" height="1" fill="#e0e0e2"/>

<!-- RIGHT SIDEBAR -->
<rect x="1505" y="330" width="415" height="522" fill="#fff"/>
<rect x="1504" y="330" width="1" height="522" fill="#e0e0e2"/>
<rect x="1505" y="330" width="415" height="30" fill="#f9f9fa"/>
<rect x="1505" y="360" width="415" height="1" fill="#e0e0e2"/>
<rect x="1540" y="329" width="116" height="3.5" fill="#0a84ff"/>
<rect x="1514.5" y="339.5" width="17" height="13" rx="1" fill="none" stroke="#555" stroke-width="1.3"/><rect x="1526" y="340" width="1" height="12" fill="#555"/><path d="M1519 343L1523 346L1519 349Z" fill="#333"/>
<g font-size="14.5" fill="#2a2a2e">
<text x="1554" y="350" fill="#0a6fd8" textLength="89" lengthAdjust="spacingAndGlyphs">Mise en page</text>
<text x="1670" y="350" textLength="48" lengthAdjust="spacingAndGlyphs">Calculé</text>
<text x="1745" y="350" textLength="91" lengthAdjust="spacingAndGlyphs">Modifications</text>
<text x="1863" y="350" textLength="37" lengthAdjust="spacingAndGlyphs">Comp</text>
</g>
<rect x="1901" y="331" width="19" height="29" fill="#f9f9fa"/>
<rect x="1902" y="331" width="1" height="29" fill="#d8d8da"/>
<path d="M1907 343H1915L1911 347Z" fill="#444"/>
<rect x="1505" y="361" width="415" height="30" fill="#f9f9fa"/><rect x="1505" y="391" width="415" height="1" fill="#e0e0e2"/>
<rect x="1505" y="447" width="415" height="1" fill="#e0e0e2"/>
<rect x="1505" y="448" width="415" height="30" fill="#f9f9fa"/><rect x="1505" y="478" width="415" height="1" fill="#e0e0e2"/>
<rect x="1505" y="514" width="415" height="1" fill="#e0e0e2"/>
<rect x="1505" y="515" width="415" height="31" fill="#f9f9fa"/><rect x="1505" y="546" width="415" height="1" fill="#e0e0e2"/>
<path d="M1514.5 374H1524L1519.2 379Z M1514.5 461H1524L1519.2 466Z M1517 526L1523 531.5L1517 537Z" fill="#8a8a8a"/>
<g font-size="14.5" fill="#18181a">
<text x="1530" y="382" textLength="51" lengthAdjust="spacingAndGlyphs">Flexbox</text>
<text x="1530" y="469" textLength="41.5" lengthAdjust="spacingAndGlyphs">Grilles</text>
<text x="1530" y="537" textLength="110.5" lengthAdjust="spacingAndGlyphs">Modèle de boîte</text>
</g>
<g font-size="13.5" font-style="italic" fill="#333">
<text x="1530" y="416" textLength="336" lengthAdjust="spacingAndGlyphs">Sélectionnez un conteneur flexible ou un élément flex</text>
<text x="1530" y="436" textLength="95" lengthAdjust="spacingAndGlyphs">pour continuer.</text>
<text x="1530" y="503" textLength="234" lengthAdjust="spacingAndGlyphs">Aucune grille CSS utilisée sur la page</text>
</g>

<!-- RED BOX -->
<rect x="840" y="357" width="653" height="458" fill="none" stroke="#ff0000" stroke-width="6"/>
</svg>
</body></html>
